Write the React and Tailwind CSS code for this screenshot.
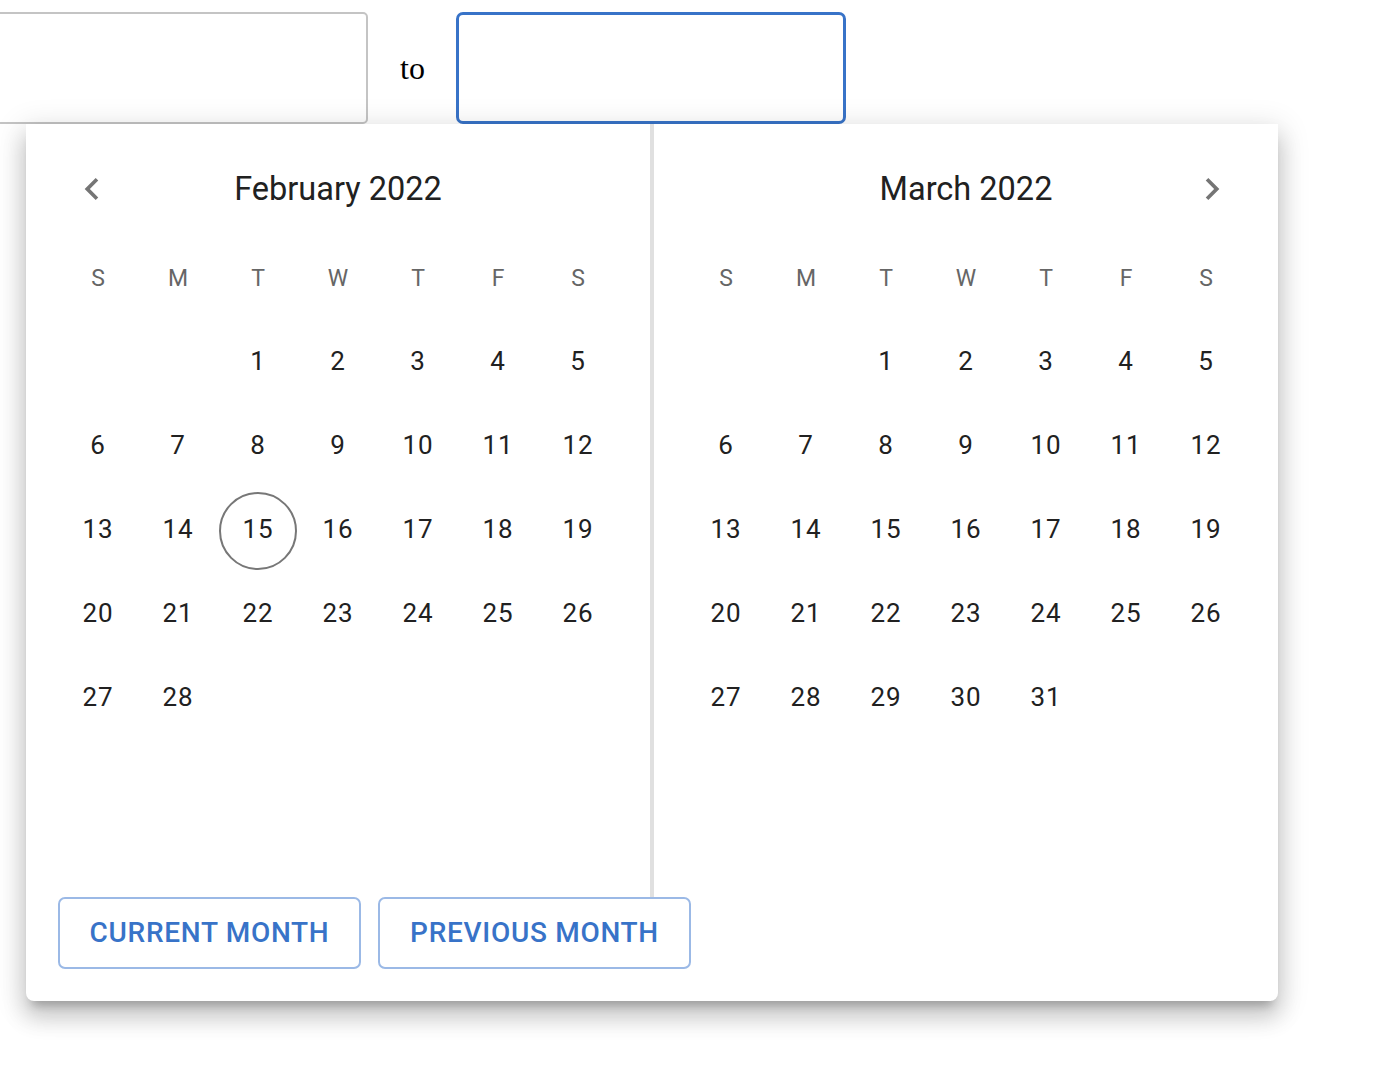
import React from 'react';

const feb = { title: 'February 2022', offset: 2, days: 28 };
const mar = { title: 'March 2022', offset: 2, days: 31 };
const weekdays = ['S', 'M', 'T', 'W', 'T', 'F', 'S'];

function ChevronLeft() {
  return (
    <svg width="44" height="44" viewBox="0 0 24 24" fill="#757575">
      <path d="M15.41 7.41 14 6l-6 6 6 6 1.41-1.41L10.83 12z" />
    </svg>
  );
}

function ChevronRight() {
  return (
    <svg width="44" height="44" viewBox="0 0 24 24" fill="#757575">
      <path d="M10 6 8.59 7.41 13.17 12l-4.58 4.59L10 18l6-6z" />
    </svg>
  );
}

function Month({ month, prev, next, selected }) {
  const cells = [];
  for (let i = 0; i < month.offset; i++) cells.push(null);
  for (let d = 1; d <= month.days; d++) cells.push(d);
  return (
    <div className="w-[624px] h-[773px] px-[32px] pt-[40px]">
      <div className="grid grid-cols-[80px_1fr_80px] h-[50px] items-center">
        <div className="flex justify-start pl-[12px]">{prev && <ChevronLeft />}</div>
        <div className="text-center text-[32.5px] text-[#212121] leading-none">{month.title}</div>
        <div className="flex justify-end pr-[12px]">{next && <ChevronRight />}</div>
      </div>
      <div className="grid grid-cols-7 mt-[23px]">
        {weekdays.map((w, i) => (
          <div key={i} className="h-[84px] flex items-center justify-center text-[23px] text-[#666]">{w}</div>
        ))}
        {cells.map((d, i) => (
          <div key={i} className="h-[84px] flex items-center justify-center">
            {d && (
              <div
                className={
                  'w-[78px] h-[78px] rounded-full flex items-center justify-center pb-[3px] text-[26px] tracking-[1px] text-[#212121] ' +
                  (d === selected ? 'border-2 border-[#777]' : '')
                }
              >
                {d}
              </div>
            )}
          </div>
        ))}
      </div>
    </div>
  );
}

export default function App() {
  return (
    <div className="min-h-screen bg-white font-['Roboto',sans-serif] pt-[12px]">
      <div className="flex items-center">
        <input readOnly className="-ml-[22px] w-[390px] h-[112px] border-2 border-[#c4c4c4] rounded-[5px] bg-white outline-none" />
        <span className="ml-[32px] mr-[31px] w-[25px] text-[32px] text-black font-['Liberation_Serif',serif]">to</span>
        <input readOnly className="w-[390px] h-[112px] border-[3px] border-[#3873c8] rounded-[7px] bg-white outline-none" />
      </div>
      <div className="relative z-10 ml-[26px] w-[1252px] h-[877px] bg-white rounded-b-[8px] shadow-[0_10px_10px_-6px_rgba(0,0,0,0.22),0_16px_22px_2px_rgba(0,0,0,0.15),0_6px_30px_4px_rgba(0,0,0,0.12)]">
        <div className="flex">
          <Month month={feb} prev selected={15} />
          <div className="w-[4px] h-[773px] bg-[#e0e0e0]" />
          <Month month={mar} next />
        </div>
        <div className="flex gap-[17px] px-[32px]">
          <button className="w-[303px] h-[72px] border-2 border-[#9bb9e6] rounded-[7px] text-[#3873c8] text-[28px] font-medium tracking-[0.7px]">
            CURRENT MONTH
          </button>
          <button className="w-[313px] h-[72px] border-2 border-[#9bb9e6] rounded-[7px] text-[#3873c8] text-[28px] font-medium tracking-[0.7px]">
            PREVIOUS MONTH
          </button>
        </div>
      </div>
    </div>
  );
}
